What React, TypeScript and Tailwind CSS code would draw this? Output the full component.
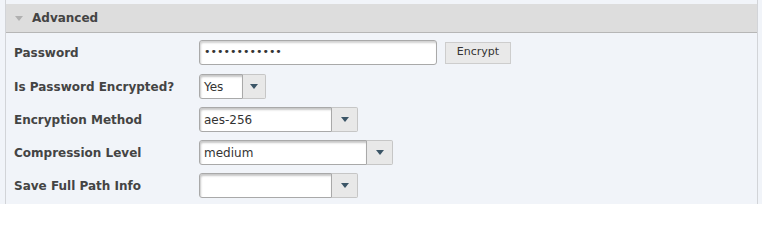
import React from 'react';

const font = { fontFamily: '"DejaVu Sans", Verdana, sans-serif' };

function Caret({ className = '' }: { className?: string }) {
  return (
    <svg width="8" height="5" viewBox="0 0 8 5" className={className}>
      <path d="M0 0h8L4 5z" fill="currentColor" />
    </svg>
  );
}

function Select({ value, textW, arrowW }: { value: string; textW: string; arrowW: string }) {
  return (
    <div className="flex h-[25px]">
      <div
        className={`${textW} h-full bg-white border border-[#a9a9a9] rounded-l-[3px] shadow-[inset_1px_2px_2px_rgba(0,0,0,0.22)] flex items-center pl-[4px] text-[12px] text-[#333]`}
      >
        {value}
      </div>
      <div
        className={`${arrowW} h-full bg-[#e8e8e8] border border-l-0 border-[#c6c6c6] rounded-r-[2px] flex items-center justify-center text-[#3b5566]`}
      >
        <Caret />
      </div>
    </div>
  );
}

function Row({ label, children, className = '' }: { label: string; children: React.ReactNode; className?: string }) {
  return (
    <div className={`flex items-center h-[25px] ${className}`}>
      <div className="w-[193px] pl-[8px] font-bold text-[12px] text-[#444]">{label}</div>
      {children}
    </div>
  );
}

export default function App() {
  return (
    <div className="h-[204px] bg-[#f1f4f9] px-[5px] pr-[4px]" style={font}>
      <div className="h-full border-x border-[#d2d4d8] pt-[4px]">
        <div className="h-[29px] bg-[#dddddd] border-b border-[#b6b6b6] flex items-center pl-[9px]">
          <Caret className="text-[#b0b0b0]" />
          <span className="ml-[9px] font-bold text-[12px] text-[#444]">Advanced</span>
        </div>
        <div className="flex flex-col gap-2 pt-[7px]">
          <Row label="Password" className="mb-px">
            <div className="w-[238px] h-[25px] bg-white border border-[#a9a9a9] rounded-[3px] shadow-[inset_1px_2px_2px_rgba(0,0,0,0.18)] flex items-center pl-[4px] text-[11px] text-[#333]">
              ••••••••••••
            </div>
            <button className="ml-[8px] w-[66px] h-[22px] bg-[#e9e9e9] border border-[#cdcdcd] text-[11px] text-[#333]">
              Encrypt
            </button>
          </Row>
          <Row label="Is Password Encrypted?">
            <Select value="Yes" textW="w-[44px]" arrowW="w-[23px]" />
          </Row>
          <Row label="Encryption Method">
            <Select value="aes-256" textW="w-[133px]" arrowW="w-[26px]" />
          </Row>
          <Row label="Compression Level">
            <Select value="medium" textW="w-[168px]" arrowW="w-[26px]" />
          </Row>
          <Row label="Save Full Path Info">
            <Select value="" textW="w-[133px]" arrowW="w-[26px]" />
          </Row>
        </div>
      </div>
    </div>
  );
}
